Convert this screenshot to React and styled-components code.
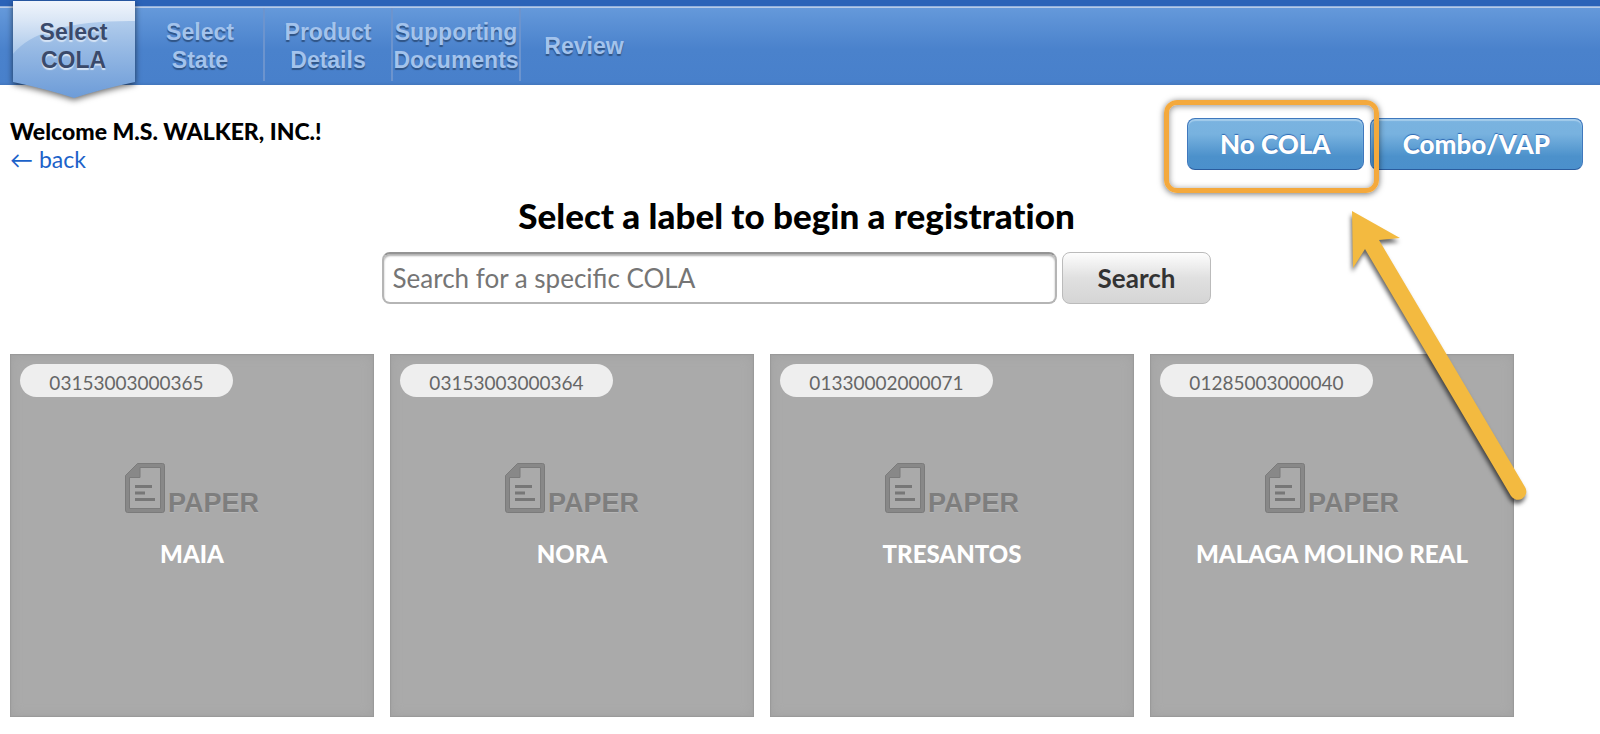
import { useState } from "react";
import styled, { createGlobalStyle, css } from "styled-components";

const GlobalStyle = createGlobalStyle`
  * {
    box-sizing: border-box;
  }

  body {
    margin: 0;
    background: white;
    color: black;
    font-family: Lato, "Liberation Sans", sans-serif;
    font-size: 23px;
    line-height: 28px;
  }
`;

const Nav = styled.nav`
  border-top: 6px solid #2b63b8;
  background: linear-gradient(#669adb, #4a82cc 55%, #4880cb 96%, #4377bd);
  box-shadow: inset 0 1px 0 #93b1dc, inset 0 2px 0 #b7cbe8;
`;

const Steps = styled.ol`
  display: flex;
  margin: 0;
  padding: 2px 9px 4px;
  list-style: none;
`;

const Step = styled.li`
  position: relative;
  display: flex;
  width: 128px;
  height: 73px;
  border-right: 2px solid ${(props) => (props.$divider ? "#6c94ce" : "transparent")};
`;

const StepLink = styled.a`
  position: relative;
  flex: 1;
  display: flex;
  align-items: center;
  justify-content: center;
  padding-top: 2px;
  color: #a3c3ec;
  font-family: "Liberation Sans", Arial, sans-serif;
  font-size: 23px;
  font-weight: bold;
  text-align: center;
  text-decoration: none;
  text-shadow: 0 2px 1px #2f5486;

  ${(props) =>
    props.$active &&
    css`
      padding-left: 3px;
      color: #3a4a6b;
      text-shadow: 0 2px 1px #d6e4f5;
    `}
`;

const Ribbon = styled.svg`
  position: absolute;
  top: -8px;
  left: 3px;
  overflow: visible;
  filter: drop-shadow(0 2px 3px rgba(0, 0, 0, 0.6));
`;

const Page = styled.main`
  padding: 31px 17px 16px 10px;
`;

const TopBar = styled.header`
  display: flex;
  align-items: flex-start;
  justify-content: space-between;
`;

const Greeting = styled.div`
  padding-top: 1px;
`;

const Welcome = styled.p`
  margin: 0;
  font-weight: 900;
`;

const BackLink = styled.a`
  color: #1b62c9;
  text-decoration: none;
`;

const Actions = styled.div`
  display: flex;
  gap: 6px;
  padding-top: 2px;
`;

const Button = styled.button`
  height: 52px;
  padding: 0 35px;
  border: 1px solid #bbb;
  border-radius: 8px;
  background: linear-gradient(#fdfdfd, #e0e0e0 50%, #d5d5d5);
  color: #333;
  font: bold 26px Lato, "Liberation Sans", sans-serif;
  cursor: pointer;
`;

const PrimaryButton = styled(Button)`
  padding: 0 32px;
  border-color: #3f78bd;
  border-bottom-color: #2b5c9e;
  background: linear-gradient(#7ab3e0, #78b2df 30%, #4c91cb 75%, #4b90cc);
  box-shadow: inset 0 2px 1px #a5cdec;
  color: white;
  font-weight: 900;
  text-shadow: 0 -1px 1px #2c67b3;
`;

const Callout = styled.div`
  position: relative;
  z-index: 1;
`;

const CalloutFrame = styled.span`
  position: absolute;
  inset: -18px -15px -23px -23px;
  border: 5px solid #f4a93d;
  border-radius: 13px;
  box-shadow: 0 1px 6px rgba(0, 0, 0, 0.55), inset 0 1px 6px rgba(0, 0, 0, 0.45);
  pointer-events: none;
`;

const CalloutArrow = styled.svg`
  position: absolute;
  top: 82px;
  left: 153px;
  overflow: visible;
  filter: drop-shadow(-1px 4px 2px rgba(0, 0, 0, 0.6));
  pointer-events: none;
`;

const Heading = styled.h1`
  margin: 18px 0 13px;
  font-size: 35px;
  font-weight: 900;
  line-height: 48px;
  font-variant-ligatures: none;
  text-align: center;
`;

const SearchForm = styled.form`
  display: flex;
  justify-content: center;
  gap: 5px;
`;

const SearchInput = styled.input`
  width: 100%;
  max-width: 675px;
  height: 52px;
  padding: 0 9px;
  border: 2px solid #b5b5b5;
  border-top-color: #949494;
  border-radius: 8px;
  box-shadow: inset 0 2px 2px #b0b0b0;
  font: 26px Lato, "Liberation Sans", sans-serif;

  &::placeholder {
    color: #757575;
  }
`;

const Labels = styled.ul`
  display: flex;
  flex-wrap: wrap;
  gap: 16px;
  margin: 50px 0 0;
  padding: 0;
  list-style: none;
`;

const LabelCard = styled.a`
  display: flex;
  flex-direction: column;
  align-items: center;
  width: 364px;
  height: 363px;
  padding: 10px;
  background: #aaa;
  box-shadow: inset 0 0 1px 1px #999, inset 0 0 12px #a0a0a0;
  color: white;
  text-decoration: none;
`;

const LabelId = styled.span`
  align-self: flex-start;
  width: 213px;
  padding-top: 5px;
  border-radius: 17px;
  background: #eee;
  color: #666;
  font-size: 19px;
  text-align: center;
`;

const Paper = styled.span`
  display: flex;
  align-items: flex-end;
  gap: 3px;
  margin: 66px 0 27px;
  color: #7e7e7e;
  font: bold 27px/20px "Liberation Sans", Arial, sans-serif;
  text-shadow: 0 1px 1px #b8b8b8;
`;

const LabelName = styled.strong`
  font-size: 24px;
  font-weight: 900;
  text-align: center;
`;

const steps = [
  { lines: ["Select", "COLA"], active: true },
  { lines: ["Select", "State"], divider: true },
  { lines: ["Product", "Details"], divider: true },
  { lines: ["Supporting", "Documents"], divider: true },
  { lines: ["Review"] },
];

const labels = [
  { id: "03153003000365", name: "MAIA" },
  { id: "03153003000364", name: "NORA" },
  { id: "01330002000071", name: "TRESANTOS" },
  { id: "01285003000040", name: "MALAGA MOLINO REAL" },
];

function StepRibbon() {
  return (
    <Ribbon width="124" height="99" viewBox="0 0 124 99" aria-hidden="true">
      <defs>
        <linearGradient id="ribbon" x1="0" y1="0" x2="0" y2="1">
          <stop offset="0" stopColor="#c3d9f1" />
          <stop offset="0.5" stopColor="#96b9e4" />
          <stop offset="1" stopColor="#6d9cd8" />
        </linearGradient>
        <linearGradient id="gloss" x1="0" y1="0" x2="0" y2="1">
          <stop offset="0" stopColor="#f0f5fc" />
          <stop offset="0.35" stopColor="#dbe7f6" />
          <stop offset="1" stopColor="#a9c7ea" />
        </linearGradient>
      </defs>
      <path d="M1 1H123V82Q90 89 62 98Q34 89 1 82Z" fill="url(#ribbon)" />
      <path d="M1 1H123V21Q28 20 1 54Z" fill="url(#gloss)" />
    </Ribbon>
  );
}

function PaperIcon() {
  return (
    <svg width="40" height="50" viewBox="0 0 40 50" aria-hidden="true">
      <path
        d="M12.500 .5H37.500Q39.500 .5 39.500 2.500V47Q39.500 49.500 37.500 49.500H2.500Q.5 49.500 .5 47V12.500Z M4.500 14.500V45.500H35.500V4.500H15V14.500Z"
        fill="#888"
        fillRule="evenodd"
        stroke="#7b7b7b"
      />
      <path d="M10 23.500H27M10 30H20M10 36.500H30" stroke="#777" strokeWidth="3" />
    </svg>
  );
}

export default function App() {
  const [query, setQuery] = useState("");

  const visible = labels.filter((label) =>
    (label.name + label.id).toLowerCase().includes(query.toLowerCase())
  );

  return (
    <>
      <GlobalStyle />
      <Nav>
        <Steps>
          {steps.map((step) => (
            <Step key={step.lines.join(" ")} $divider={step.divider}>
              {step.active && <StepRibbon />}
              <StepLink href="#" $active={step.active}>
                <span>
                  {step.lines[0]}
                  {step.lines[1] && <br />}
                  {step.lines[1]}
                </span>
              </StepLink>
            </Step>
          ))}
        </Steps>
      </Nav>

      <Page>
        <TopBar>
          <Greeting>
            <Welcome>Welcome M.S. WALKER, INC.!</Welcome>
            <BackLink href="#">← back</BackLink>
          </Greeting>
          <Actions>
            <Callout>
              <PrimaryButton type="button">No COLA</PrimaryButton>
              <CalloutFrame />
              <CalloutArrow width="190" height="310" viewBox="0 0 190 310" aria-hidden="true">
                <path
                  d="M12 11L60 38L39 40L185 287A8 8 0 0 1 171 296L25 49L13 68Z"
                  fill="#f3ba40"
                />
              </CalloutArrow>
            </Callout>
            <PrimaryButton type="button">Combo/VAP</PrimaryButton>
          </Actions>
        </TopBar>

        <Heading>Select a label to begin a registration</Heading>
        <SearchForm onSubmit={(e) => e.preventDefault()}>
          <SearchInput
            aria-label="Search for a specific COLA"
            placeholder="Search for a specific COLA"
            value={query}
            onChange={(e) => setQuery(e.target.value)}
          />
          <Button type="submit">Search</Button>
        </SearchForm>

        <Labels>
          {visible.map((label) => (
            <li key={label.id}>
              <LabelCard href="#">
                <LabelId>{label.id}</LabelId>
                <Paper>
                  <PaperIcon />
                  PAPER
                </Paper>
                <LabelName>{label.name}</LabelName>
              </LabelCard>
            </li>
          ))}
        </Labels>
      </Page>
    </>
  );
}
